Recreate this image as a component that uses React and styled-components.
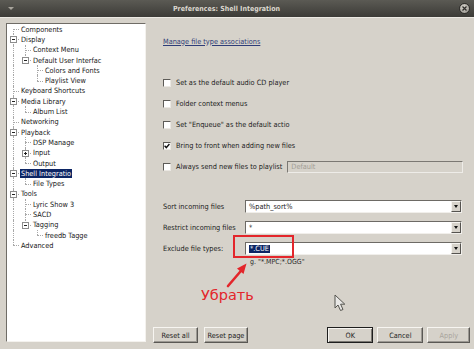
import React from "react";
import styled, { createGlobalStyle } from "styled-components";

const GlobalStyle = createGlobalStyle`
  body {
    margin: 0;
    background: #d6d2ca;
  }
  * {
    box-sizing: border-box;
  }
`;

const Window = styled.div`
  position: relative;
  width: 474px;
  height: 349px;
  overflow: hidden;
  background: #d6d2ca;
  font-family: "DejaVu Sans Condensed", "DejaVu Sans", sans-serif;
  font-size: 7.3px;
  color: #1c1c1c;
  display: flex;
  flex-direction: column;
`;

const TitleBar = styled.div`
  flex: none;
  height: 18px;
  padding: 0 4px 0 6px;
  display: flex;
  align-items: center;
  background: linear-gradient(#5b5a54, #3c3b37);
  border-bottom: 1px solid #ece9e3;
`;

const MenuArrow = styled.span`
  width: 0;
  height: 0;
  margin-left: 2px;
  border-left: 3px solid transparent;
  border-right: 3px solid transparent;
  border-top: 3px solid #a8a49c;
`;

const Title = styled.div`
  flex: 1;
  text-align: center;
  padding-right: 20px;
  color: #dcd8cf;
  font-weight: bold;
  font-size: 7px;
`;

const CloseButton = styled.span`
  width: 11px;
  height: 11px;
  border-radius: 50%;
  background: radial-gradient(circle at 40% 35%, #d9d6cf, #8e8b84);
  border: 1px solid #2e2d2a;
  display: flex;
  align-items: center;
  justify-content: center;
`;

const Body = styled.div`
  flex: 1;
  display: flex;
  padding: 5px 0 7px 6px;
  min-height: 0;
`;

const TreePanel = styled.div`
  width: 140px;
  flex: none;
  background: #fff;
  border: 1px solid;
  border-color: #6f6c66 #f4f2ee #f4f2ee #6f6c66;
  overflow: hidden;
`;

const TreeRow = styled.div`
  height: 10.3px;
  display: flex;
  align-items: stretch;
  white-space: nowrap;
`;

const Guide = styled.span`
  position: relative;
  flex: none;
  width: 12px;
  &::before {
    content: "";
    display: ${(p) => (p.$on ? "block" : "none")};
    position: absolute;
    left: 6px;
    top: 0;
    bottom: 0;
    border-left: 1px dotted #a8a8a8;
  }
`;

const Elbow = styled.span`
  position: relative;
  flex: none;
  width: 12px;
  &::before {
    content: "";
    position: absolute;
    left: 6px;
    top: ${(p) => (p.$first ? "50%" : "0")};
    bottom: ${(p) => (p.$last ? "50%" : "0")};
    border-left: 1px dotted #a8a8a8;
  }
  &::after {
    content: "";
    position: absolute;
    left: 6px;
    right: 0;
    top: 50%;
    border-top: 1px dotted #a8a8a8;
  }
`;

const Expander = styled.span`
  position: absolute;
  z-index: 1;
  left: 3px;
  top: 50%;
  width: 7px;
  height: 7px;
  margin-top: -3px;
  background: #fff;
  border: 1px solid #8d8d8d;
  &::before {
    content: "";
    position: absolute;
    left: 1px;
    right: 1px;
    top: 2px;
    border-top: 1px solid #222;
  }
  &::after {
    content: "";
    display: ${(p) => (p.$closed ? "block" : "none")};
    position: absolute;
    top: 1px;
    bottom: 1px;
    left: 2px;
    border-left: 1px solid #222;
  }
`;

const TreeLabel = styled.span`
  align-self: center;
  margin-left: 1px;
  padding: 0 1px;
  line-height: 9px;
  color: ${(p) => (p.$selected ? "#fff" : "#161616")};
  background: ${(p) => (p.$selected ? "#0c2564" : "transparent")};
`;

const Pane = styled.div`
  flex: 1;
  margin-left: 6px;
  margin-bottom: -1px;
  padding: 0 8px 0 11px;
  display: flex;
  flex-direction: column;
`;

const LinkRow = styled.div`
  margin-top: 13px;
  height: 10px;
  display: flex;
  align-items: center;
`;

const Link = styled.span`
  color: #2f3d78;
  text-decoration: underline;
`;

const CheckList = styled.div`
  margin-top: 30px;
  display: flex;
  flex-direction: column;
  gap: 8px;
`;

const CheckRow = styled.div`
  height: 13px;
  display: flex;
  align-items: center;
  gap: 5px;
  white-space: nowrap;
`;

const Box = styled.span`
  flex: none;
  width: 8px;
  height: 8px;
  background: #fff;
  border: 1px solid;
  border-color: #5d5b57 #ebe8e3 #ebe8e3 #5d5b57;
  display: flex;
  align-items: center;
  justify-content: center;
`;

const PlaylistField = styled.span`
  flex: none;
  width: 176px;
  height: 12px;
  margin-left: auto;
  margin-right: 7px;
  padding-left: 3px;
  display: flex;
  align-items: center;
  color: #a19d95;
  border: 1px solid;
  border-color: #7b7873 #eeece8 #eeece8 #7b7873;
`;

const FieldList = styled.div`
  margin-top: 27px;
  display: flex;
  flex-direction: column;
  gap: 8px;
  margin-right: 8px;
`;

const FieldRow = styled.div`
  height: 13px;
  display: flex;
  align-items: center;
`;

const FieldLabel = styled.span`
  flex: none;
  width: 82px;
  white-space: nowrap;
`;

const Combo = styled.div`
  flex: 1;
  height: 13px;
  background: #fff;
  border: 1px solid;
  border-color: #6d6a65 #f1efeb #f1efeb #6d6a65;
  display: flex;
  align-items: center;
  padding-left: 3px;
`;

const ComboText = styled.span`
  flex: 1;
  display: flex;
  align-items: center;
`;

const Selected = styled.span`
  background: #0c2564;
  color: #fff;
  padding: 0 1px;
  line-height: 8px;
`;

const DropButton = styled.span`
  flex: none;
  width: 10px;
  height: 11px;
  background: #d6d2ca;
  border: 1px solid;
  border-color: #f6f4f0 #55534f #55534f #f6f4f0;
  display: flex;
  align-items: center;
  justify-content: center;
  &::before {
    content: "";
    border-left: 2.5px solid transparent;
    border-right: 2.5px solid transparent;
    border-top: 3px solid #111;
  }
`;

const Hint = styled.div`
  margin-top: 2px;
  height: 10px;
  padding-left: 87px;
  font-size: 7px;
  color: #2a2a2a;
  display: flex;
  align-items: center;
`;

const ButtonBar = styled.div`
  margin-top: auto;
  margin-left: -10px;
  display: flex;
  align-items: center;
`;

const ButtonGroup = styled.div`
  display: flex;
  gap: ${(p) => p.$gap}px;
  margin-left: ${(p) => (p.$push ? "auto" : "0")};
`;

const Button = styled.span`
  width: ${(p) => p.$w}px;
  height: 16px;
  display: flex;
  align-items: center;
  justify-content: center;
  background: #d6d2ca;
  color: ${(p) => (p.$disabled ? "#a9a59d" : "#1c1c1c")};
  border: 1px solid;
  border-color: ${(p) =>
    p.$default ? "#1e1e1e" : "#f7f5f1 #5a5854 #5a5854 #f7f5f1"};
  box-shadow: ${(p) =>
    p.$default
      ? "inset 1px 1px #f7f5f1, inset -1px -1px #7a7771"
      : "inset -1px -1px #9b9892"};
`;

const Annotation = styled.div`
  position: absolute;
  left: 233px;
  top: 235px;
  width: 61px;
  height: 23px;
  border: 2px solid #e3262b;
  pointer-events: none;
`;

const ArrowLayer = styled.svg`
  position: absolute;
  left: 216px;
  top: 260px;
  pointer-events: none;
`;

const Caption = styled.div`
  position: absolute;
  left: 201px;
  top: 287px;
  font-family: "DejaVu Sans", sans-serif;
  font-size: 14.5px;
  color: #e3262b;
`;

const Cursor = styled.svg`
  position: absolute;
  left: 334px;
  top: 294px;
`;

const tree = [
  { t: "Components", g: [], first: true },
  { t: "Display", g: [], open: true },
  { t: "Context Menu", g: [1] },
  { t: "Default User Interfac", g: [1], open: true, last: true },
  { t: "Colors and Fonts", g: [1, 0] },
  { t: "Playlist View", g: [1, 0], last: true },
  { t: "Keyboard Shortcuts", g: [] },
  { t: "Media Library", g: [], open: true },
  { t: "Album List", g: [1], last: true },
  { t: "Networking", g: [] },
  { t: "Playback", g: [], open: true },
  { t: "DSP Manage", g: [1] },
  { t: "Input", g: [1], closed: true },
  { t: "Output", g: [1], last: true },
  { t: "Shell Integratio", g: [], open: true, sel: true },
  { t: "File Types", g: [1], last: true },
  { t: "Tools", g: [], open: true },
  { t: "Lyric Show 3", g: [1] },
  { t: "SACD", g: [1] },
  { t: "Tagging", g: [1], open: true, last: true },
  { t: "freedb Tagge", g: [1, 0], last: true },
  { t: "Advanced", g: [], last: true },
];

const checks = [
  { t: "Set as the default audio CD player" },
  { t: "Folder context menus" },
  { t: "Set \"Enqueue\" as the default actio" },
  { t: "Bring to front when adding new files", on: true },
  { t: "Always send new files to playlist", field: "Default" },
];

function Tree() {
  return (
    <TreePanel>
      {tree.map((row) => (
        <TreeRow key={row.t}>
          {row.g.map((on, i) => (
            <Guide key={i} $on={on} />
          ))}
          <Elbow $first={row.first} $last={row.last}>
            {(row.open || row.closed) && <Expander $closed={row.closed} />}
          </Elbow>
          <TreeLabel $selected={row.sel}>{row.t}</TreeLabel>
        </TreeRow>
      ))}
    </TreePanel>
  );
}

export default function App() {
  return (
    <>
      <GlobalStyle />
      <Window>
        <TitleBar>
          <MenuArrow />
          <Title>Preferences: Shell Integration</Title>
          <CloseButton>
            <svg width="5" height="5" viewBox="0 0 5 5">
              <path d="M0.5 0.5L4.5 4.5M4.5 0.5L0.5 4.5" stroke="#2f2e2b" strokeWidth="1.3" />
            </svg>
          </CloseButton>
        </TitleBar>
        <Body>
          <Tree />
          <Pane>
            <LinkRow>
              <Link>Manage file type associations</Link>
            </LinkRow>
            <CheckList>
              {checks.map((c) => (
                <CheckRow key={c.t}>
                  <Box>
                    {c.on && (
                      <svg width="6" height="6" viewBox="0 0 6 6">
                        <path d="M0.6 2.8L2.3 4.6L5.4 1" fill="none" stroke="#111" strokeWidth="1.4" />
                      </svg>
                    )}
                  </Box>
                  <span>{c.t}</span>
                  {c.field && <PlaylistField>{c.field}</PlaylistField>}
                </CheckRow>
              ))}
            </CheckList>
            <FieldList>
              <FieldRow>
                <FieldLabel>Sort incoming files</FieldLabel>
                <Combo>
                  <ComboText>%path_sort%</ComboText>
                  <DropButton />
                </Combo>
              </FieldRow>
              <FieldRow>
                <FieldLabel>Restrict incoming files</FieldLabel>
                <Combo>
                  <ComboText>*</ComboText>
                  <DropButton />
                </Combo>
              </FieldRow>
              <FieldRow>
                <FieldLabel>Exclude file types:</FieldLabel>
                <Combo>
                  <ComboText>
                    <Selected>*.CUE</Selected>
                  </ComboText>
                  <DropButton />
                </Combo>
              </FieldRow>
            </FieldList>
            <Hint>g. "*.MPC;*.OGG"</Hint>
            <ButtonBar>
              <ButtonGroup $gap={6}>
                <Button $w={45}>Reset all</Button>
                <Button $w={44}>Reset page</Button>
              </ButtonGroup>
              <ButtonGroup $gap={4} $push>
                <Button $w={46} $default>OK</Button>
                <Button $w={46}>Cancel</Button>
                <Button $w={43} $disabled>Apply</Button>
              </ButtonGroup>
            </ButtonBar>
          </Pane>
        </Body>
        <Annotation />
        <ArrowLayer width="40" height="34" viewBox="0 0 40 34">
          <path d="M12 26L27 8.5" stroke="#e3262b" strokeWidth="2.6" strokeLinecap="round" />
          <path d="M30.5 3.5L21 8.5L27.5 14Z" fill="#e3262b" />
        </ArrowLayer>
        <Caption>Убрать</Caption>
        <Cursor width="14" height="19" viewBox="0 0 14 19">
          <path
            d="M1 1L1 14L4 11L6.5 16.5L9 15.5L6.6 10.2L10.8 10.2Z"
            fill="#e9e8e6"
            stroke="#55544f"
            strokeWidth="1"
            strokeLinejoin="round"
          />
        </Cursor>
      </Window>
    </>
  );
}
